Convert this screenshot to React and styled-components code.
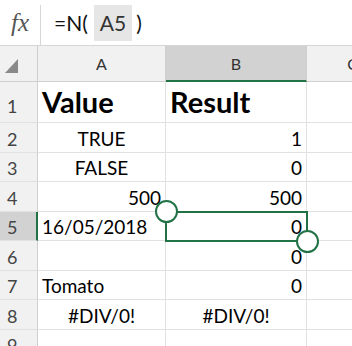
import React from "react";
import styled, { createGlobalStyle } from "styled-components";

const GlobalStyle = createGlobalStyle`
  body {
    margin: 0;
    background: #ffffff;
    font-family: Lato, "Liberation Sans", sans-serif;
    overflow: hidden;
  }
`;

const green = "#217346";
const grid = "#e1e1e1";
const headBorder = "#cfcfcf";

const Page = styled.div`
  width: 352px;
  height: 346px;
  overflow: hidden;
`;

const FormulaBar = styled.div`
  display: flex;
  height: 46px;
  box-sizing: border-box;
  border-bottom: 1px solid #d6d6d6;
`;

const FxBox = styled.div`
  width: 41px;
  margin-top: 5px;
  box-sizing: border-box;
  border-right: 1px solid #d6d6d6;
  display: flex;
  align-items: center;
  justify-content: center;
  padding-bottom: 4px;
  font-family: "Liberation Serif", serif;
  font-style: italic;
  font-size: 25px;
  color: #555555;
`;

const Formula = styled.div`
  display: flex;
  align-items: center;
  padding-left: 13px;
  font-size: 21px;
  color: #111111;
`;

const RefChip = styled.span`
  display: flex;
  align-items: center;
  height: 36px;
  margin: 0 4px 0 6px;
  padding: 0 6px;
  background: #e6e6e6;
  color: #333333;
`;

const Sheet = styled.div`
  display: grid;
  grid-template-columns: 38px 128px 141px 92px;
  grid-template-rows: 36px 41px repeat(9, 29.5px);
`;

const ColHead = styled.div`
  box-sizing: border-box;
  display: flex;
  align-items: center;
  justify-content: center;
  background: ${(p) => (p.$selected ? "#d2d2d2" : "#f1f1f1")};
  border-right: 1px solid ${headBorder};
  border-bottom: ${(p) => (p.$selected ? `2px solid ${green}` : `1px solid ${headBorder}`)};
  font-size: 16px;
  color: #333333;
  padding-top: ${(p) => (p.$selected ? "1px" : "0")};
`;

const Corner = styled(ColHead)`
  justify-content: flex-start;
  align-items: flex-end;
  padding: 0 0 8px 5px;
`;

const RowHead = styled.div`
  box-sizing: border-box;
  display: flex;
  align-items: flex-end;
  padding: 0 0 ${(p) => (p.$tall ? "7px" : "4px")} 7px;
  background: ${(p) => (p.$selected ? "#d2d2d2" : "#f1f1f1")};
  border-right: ${(p) => (p.$selected ? `2px solid ${green}` : `1px solid ${headBorder}`)};
  border-bottom: 1px solid ${grid};
  font-size: 18px;
  line-height: 1;
  color: #444444;
`;

const Cell = styled.div`
  position: ${(p) => (p.$active ? "relative" : "static")};
  box-sizing: border-box;
  display: flex;
  align-items: flex-end;
  justify-content: ${(p) =>
    p.$align === "right" ? "flex-end" : p.$align === "center" ? "center" : "flex-start"};
  padding: 0 4px ${(p) => (p.$bold ? "6px" : "4px")} 4px;
  border-right: 1px solid ${grid};
  border-bottom: 1px solid ${grid};
  font-size: ${(p) => (p.$bold ? "29px" : "19px")};
  font-weight: ${(p) => (p.$bold ? 700 : 400)};
  line-height: 1;
  color: #000000;
  white-space: nowrap;
`;

const Frame = styled.div`
  position: absolute;
  top: -1px;
  left: -1px;
  right: -2px;
  bottom: -2px;
  border: 2px solid ${green};
  pointer-events: none;
`;

const Handle = styled.div`
  position: absolute;
  width: 19px;
  height: 19px;
  border-radius: 50%;
  border: 2px solid ${green};
  background: #ffffff;
  ${(p) =>
    p.$end
      ? "right: -12.5px; bottom: -12.5px;"
      : "left: -11.5px; top: -11.5px;"}
`;

const SelectAll = () => (
  <svg width="14" height="14" viewBox="0 0 14 14">
    <polygon points="13,0 13,14 0,14" fill="#8a8a8a" />
  </svg>
);

const rows = [
  { n: 1, a: "Value", b: "Result", bold: true },
  { n: 2, a: "TRUE", aAlign: "center", b: "1" },
  { n: 3, a: "FALSE", aAlign: "center", b: "0" },
  { n: 4, a: "500", aAlign: "right", b: "500" },
  { n: 5, a: "16/05/2018", b: "0", active: true },
  { n: 6, a: "", b: "0" },
  { n: 7, a: "Tomato", b: "0" },
  { n: 8, a: "#DIV/0!", aAlign: "center", b: "#DIV/0!", bAlign: "center" },
  { n: 9, a: "", b: "" },
];

export default function App() {
  return (
    <Page>
      <GlobalStyle />
      <FormulaBar>
        <FxBox>fx</FxBox>
        <Formula>
          =N(
          <RefChip>A5</RefChip>)
        </Formula>
      </FormulaBar>
      <Sheet>
        <Corner>
          <SelectAll />
        </Corner>
        <ColHead>A</ColHead>
        <ColHead $selected>B</ColHead>
        <ColHead>C</ColHead>
        {rows.map((r) => (
          <React.Fragment key={r.n}>
            <RowHead $selected={r.active} $tall={r.bold}>
              {r.n}
            </RowHead>
            <Cell $bold={r.bold} $align={r.aAlign || "left"}>
              {r.a}
            </Cell>
            <Cell
              $bold={r.bold}
              $align={r.bold ? "left" : r.bAlign || "right"}
              $active={r.active}
            >
              {r.b}
              {r.active && (
                <>
                  <Frame />
                  <Handle />
                  <Handle $end />
                </>
              )}
            </Cell>
            <Cell />
          </React.Fragment>
        ))}
      </Sheet>
    </Page>
  );
}
